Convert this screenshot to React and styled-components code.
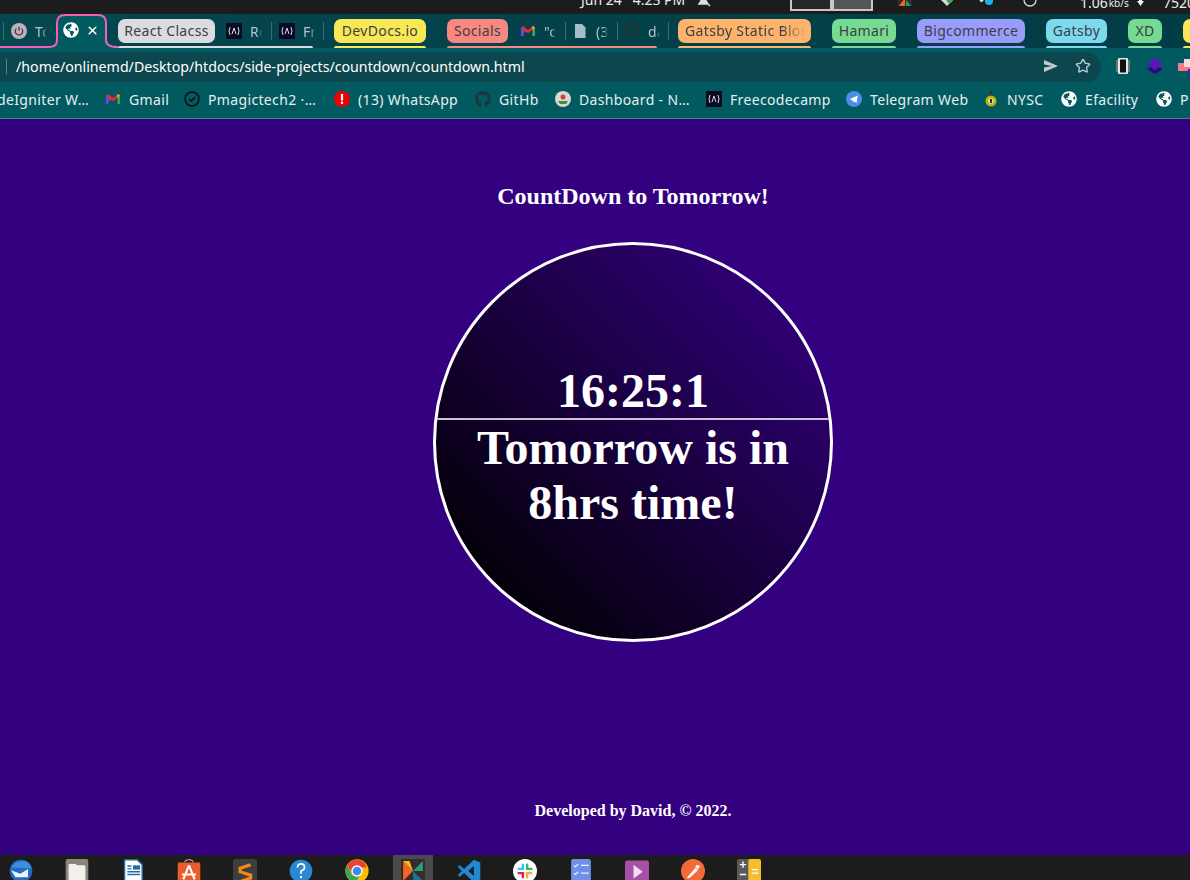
import styled, { createGlobalStyle } from "styled-components";
import { FaGithub, FaGlobeAmericas } from "react-icons/fa";
import { Star, X } from "lucide-react";

const Global = createGlobalStyle`
  html, body { margin: 0; padding: 0; background: #330080; }
  * { box-sizing: border-box; }
`;

const Screen = styled.div`
  width: 1190px;
  height: 880px;
  overflow: hidden;
  display: flex;
  flex-direction: column;
  font-family: "Noto Sans", "Open Sans", sans-serif;
  font-size: 14px;
  letter-spacing: 0.35px;
`;

/* top panel */
const Panel = styled.div`
  height: 14px;
  flex: none;
  background: #1c1c1c;
  display: flex;
  align-items: flex-end;
  overflow: hidden;
  color: #eee;
  letter-spacing: 0;
`;
const PanelItem = styled.div`
  flex: none;
  width: ${(p) => (p.$w ? `${p.$w}px` : "auto")};
  margin-left: ${(p) => p.$ml}px;
  margin-bottom: ${(p) => p.$mb ?? 6}px;
  display: flex;
  align-items: flex-end;
  line-height: 16px;
  white-space: nowrap;
`;
const NetUnit = styled.span`
  font-size: 10px;
  line-height: 10px;
  margin: 0 0 3px 1px;
`;
const WorkspaceBox = styled.div`
  width: ${(p) => p.$w}px;
  height: 16px;
  border: 2px solid #c8c8c8;
  background: ${(p) => (p.$on ? "#555" : "#262626")};
`;

/* tab strip */
const Strip = styled.div`
  height: 34px;
  flex: none;
  background: linear-gradient(90deg, #04474f, #023c44);
  display: flex;
  align-items: flex-start;
  padding: 5px 0 0 3px;
`;
const Sep = styled.div`
  width: 1px;
  height: 18px;
  margin-top: 3px;
  flex: none;
  background: #3d6d73;
`;
const TabItem = styled.div`
  flex: none;
  width: ${(p) => p.$w}px;
  height: 24px;
  padding-left: ${(p) => p.$pad}px;
  display: flex;
  align-items: center;
  gap: 8px;
  overflow: hidden;
`;
const TabTitle = styled.span`
  width: 12px;
  flex: none;
  overflow: hidden;
  white-space: nowrap;
  color: #b5c4c6;
  -webkit-mask-image: linear-gradient(90deg, #000 60%, transparent);
  mask-image: linear-gradient(90deg, #000 60%, transparent);
`;
const ActiveTab = styled.div`
  position: relative;
  flex: none;
  width: 51px;
  height: 34px;
  margin-top: -5px;
  padding: 0 0 2px 7px;
  display: flex;
  align-items: center;
  gap: 5px;
  color: #fff;
  svg { position: relative; flex: none; }
`;
const TabOutline = styled.svg`
  position: absolute !important;
  left: -56px;
  top: 0;
`;
const Group = styled.div`
  flex: none;
  margin-left: ${(p) => p.$ml}px;
  display: flex;
  flex-direction: column;
`;
const GroupRow = styled.div`
  display: flex;
  align-items: flex-start;
`;
const Chip = styled.div`
  flex: none;
  width: ${(p) => p.$w}px;
  height: 24px;
  border-radius: 7px;
  background: ${(p) => p.$bg};
  color: #3c4043;
  text-align: center;
  line-height: 23px;
  white-space: nowrap;
  overflow: hidden;
`;
const FadeLabel = styled.span`
  display: block;
  padding-left: 7px;
  text-align: left;
  -webkit-mask-image: linear-gradient(90deg, #000 78%, transparent 96%);
  mask-image: linear-gradient(90deg, #000 78%, transparent 96%);
`;
const Underline = styled.div`
  width: ${(p) => p.$w}px;
  height: 2px;
  margin-top: 3px;
  border-radius: 2px 2px 0 0;
  background: ${(p) => p.$bg};
`;

/* toolbar */
const Toolbar = styled.div`
  height: 34px;
  flex: none;
  background: #005a60;
  padding-top: 4px;
  display: flex;
  align-items: center;
`;
const Omnibox = styled.div`
  flex: none;
  width: 1101px;
  height: 30px;
  border-radius: 0 15px 15px 0;
  background: #0c474f;
  display: flex;
  align-items: center;
  padding: 0 2px 2px 6px;
  color: #fff;
`;
const OmniSep = styled.div`
  width: 1px;
  height: 15px;
  background: #5b8286;
  margin-right: 9px;
`;
const Url = styled.span`
  flex: 1;
  white-space: nowrap;
  letter-spacing: 0;
  font-size: 14.2px;
`;
const OmniIcon = styled.div`
  flex: none;
  width: 32px;
  display: flex;
  justify-content: center;
  color: #bfcccd;
`;
const ExtIcons = styled.div`
  flex: none;
  display: flex;
  margin-left: 6px;
  width: 83px;
  overflow: hidden;
`;
const ExtCell = styled.div`
  flex: none;
  width: 32px;
  display: flex;
  justify-content: center;
`;

/* bookmarks */
const Bookmarks = styled.div`
  height: 37px;
  flex: none;
  background: #005a60;
  border-bottom: 1px solid #3b8b8d;
  padding-bottom: 2px;
  display: flex;
  align-items: center;
  color: #e8eeee;
  overflow: hidden;
`;
const Bookmark = styled.div`
  flex: none;
  width: ${(p) => p.$w}px;
  margin-left: ${(p) => p.$ml ?? 0}px;
  display: flex;
  align-items: center;
  gap: 8px;
  white-space: nowrap;
  svg { flex: none; }
`;

/* page */
const Page = styled.main`
  flex: 1;
  background: #330080;
  color: #fff;
  font-family: "Liberation Serif", "Times New Roman", serif;
  font-weight: bold;
  letter-spacing: 0;
  display: flex;
  flex-direction: column;
  align-items: center;
  padding: 63px 0 0 76px;
`;
const Title = styled.h3`
  margin: 0;
  font-size: 24px;
  line-height: 28px;
`;
const Circle = styled.div`
  width: 400px;
  height: 400px;
  margin-top: 32px;
  border: 3px solid #fff;
  border-radius: 50%;
  background: linear-gradient(45deg, #000 8%, #330080 95%);
  padding-top: 118px;
  text-align: center;
  overflow: hidden;
`;
const Time = styled.div`
  font-size: 48px;
  line-height: 55px;
  border-bottom: 2px solid #c9c2d4;
`;
const Message = styled.div`
  font-size: 48px;
  line-height: 55px;
  padding: 0 30px;
`;
const Footer = styled.footer`
  margin-top: 160px;
  font-size: 16px;
  line-height: 18px;
`;

/* dock */
const Dock = styled.div`
  height: 25px;
  flex: none;
  background: #1c1c1c;
  display: flex;
  gap: 16px;
  padding-left: 1px;
  overflow: hidden;
`;
const DockCell = styled.div`
  flex: none;
  width: 40px;
  height: 25px;
  display: flex;
  justify-content: center;
  align-items: flex-start;
  padding-top: 4px;
  overflow: hidden;
  background: ${(p) => (p.$active ? "#4a4a4a" : "transparent")};
  svg { flex: none; width: 24px; height: 24px; }
`;

const Power = () => (
  <svg width="16" height="16" viewBox="0 0 16 16">
    <circle cx="8" cy="8" r="8" fill="#b9b4b8" />
    <path d="M5.4 5.6a3.7 3.7 0 1 0 5.2 0M8 3.8v4" stroke="#5b2a58" strokeWidth="1.3" fill="none" />
  </svg>
);
const Fcc = () => (
  <svg width="16" height="16" viewBox="0 0 16 16">
    <rect width="16" height="16" fill="#0a0a23" />
    <path d="M4 4Q2 8 4 12M12 4Q14 8 12 12M8 5L6 11M8 5L10 11" stroke="#d8d8e0" strokeWidth="1" fill="none" />
  </svg>
);
const GmailIcon = () => (
  <svg width="16" height="16" viewBox="0 0 16 16">
    <path d="M1 13V4.5l2.6 1V13z" fill="#7b3fe0" />
    <path d="M12.4 13V5.500l2.600-1V13z" fill="#34a853" />
    <path d="M1 4.500L3 3l5 4 5-4 2 1.500-2.600 2.400L8 10.300 3.600 6.900z" fill="#ea2b2b" />
    <path d="M12.400 6.900L15 4.500 13 3l-.6.500z" fill="#fbbc04" />
    <path d="M3.600 6.900v3L6 8.500z" fill="#2f6fe8" />
  </svg>
);
const DocIcon = () => (
  <svg width="16" height="16" viewBox="0 0 16 16">
    <path d="M3 1h7l3.500 3.500V15H3z" fill="#a6bcc8" />
  </svg>
);
const Globe = () => <FaGlobeAmericas size={16} color="#fff" />;
const Github = ({ color = "#22343a" }) => <FaGithub size={16} color={color} />;

const CheckCircle = () => (
  <svg width="16" height="16" viewBox="0 0 16 16">
    <circle cx="8" cy="8" r="7" stroke="#0b0b0b" strokeWidth="1.500" fill="none" />
    <path d="M5 8l2.200 2L11 6.200" stroke="#0b0b0b" strokeWidth="1.500" fill="none" />
  </svg>
);
const AlertIcon = () => (
  <svg width="16" height="16" viewBox="0 0 16 16">
    <circle cx="8" cy="8" r="8" fill="#f00000" />
    <rect x="6.900" y="3" width="2.200" height="6.500" fill="#fff" />
    <rect x="6.900" y="10.700" width="2.200" height="2.200" fill="#fff" />
  </svg>
);
const DashIcon = () => (
  <svg width="16" height="16" viewBox="0 0 16 16">
    <circle cx="8" cy="8" r="8" fill="#d8d8d0" />
    <path d="M3 10h10l-2 3H5z" fill="#3f8f3f" />
    <circle cx="8" cy="6" r="2.500" fill="#c8443c" />
  </svg>
);
const TelegramIcon = () => (
  <svg width="16" height="16" viewBox="0 0 16 16">
    <circle cx="8" cy="8" r="8" fill="#4a90e2" />
    <path d="M3.500 8.200L11.800 4.500 10.500 12 8 10.300 6.900 11.500 6.500 9.200z" fill="#fff" />
  </svg>
);
const NyscIcon = () => (
  <svg width="16" height="16" viewBox="0 0 16 16">
    <rect x="7.200" y="0" width="1.600" height="5" fill="#5b2020" />
    <circle cx="8" cy="10" r="5.500" fill="#b9b400" />
    <circle cx="8" cy="10" r="3" fill="#d6d6b0" />
    <rect x="7" y="8" width="2" height="4" fill="#333" />
  </svg>
);
const SendIcon = () => (
  <svg width="16" height="14" viewBox="0 0 16 14">
    <path d="M1 1l14 6-14 6V8.500L9 7 1 5.500z" fill="#bfcccd" />
  </svg>
);
const PhoneExt = () => (
  <svg width="16" height="18" viewBox="0 0 16 18">
    <rect x="1" y="3" width="14" height="12" fill="#5e7d80" />
    <rect x="3" y="1" width="10" height="16" rx="1" fill="#e6e6e6" />
    <rect x="5" y="2.500" width="6" height="13" fill="#111" />
  </svg>
);
const LayersExt = () => (
  <svg width="18" height="18" viewBox="0 0 18 18">
    <path d="M9 8l8 4-8 5-8-5z" fill="#2d0a7a" />
    <path d="M9 1l8 6-8 6-8-6z" fill="#5a14b8" />
  </svg>
);
const PinkExt = () => (
  <svg width="18" height="20" viewBox="0 0 18 20">
    <rect x="0" y="6" width="12" height="8" fill="#f47a86" />
    <rect x="6" y="2" width="8" height="8" fill="#ffd8dc" />
    <rect x="10" y="12" width="6" height="8" fill="#4a14c8" />
  </svg>
);

const Thunderbird = () => (
  <svg viewBox="0 0 34 34">
    <circle cx="17" cy="17" r="16" fill="#1f6cc0" />
    <path d="M3 12Q10 2 22 3q8 2 10 10z" fill="#3d8ee0" />
    <path d="M3 16l13 5 11-7v12H9z" fill="#eef2f6" />
  </svg>
);
const Files = () => (
  <svg viewBox="0 0 34 34">
    <rect x="1" y="0" width="32" height="34" rx="3" fill="#8c8678" />
    <path d="M5 9q0-2 2-2h8l2 2h10q2 0 2 2v17q0 2-2 2H7q-2 0-2-2z" fill="#f2f0ec" />
  </svg>
);
const Writer = () => (
  <svg viewBox="0 0 34 34">
    <path d="M5 1h18l7 7v25H5z" fill="#fff" stroke="#1f6ca8" strokeWidth="2" />
    <rect x="17" y="9" width="10" height="6" fill="#1f6ca8" />
    <path d="M9 10h6M9 14h6M9 18h18M9 22h18" stroke="#1f6ca8" strokeWidth="2" />
  </svg>
);
const AppCenter = () => (
  <svg viewBox="0 0 34 34">
    <path d="M11 5q0-4 6-4t6 4" stroke="#c9b9a8" strokeWidth="1.500" fill="none" />
    <rect x="1" y="5" width="32" height="29" rx="2" fill="#e95d2a" />
    <path d="M17 9L9 29M17 9l8 20M7 22h20" stroke="#fff" strokeWidth="3" fill="none" />
  </svg>
);
const Sublime = () => (
  <svg viewBox="0 0 34 34">
    <rect x="0" y="0" width="34" height="34" rx="3" fill="#3d3d3d" />
    <path d="M25 8L10 13v5l15 5v4L10 32" stroke="#f28a1a" strokeWidth="4.500" fill="none" />
  </svg>
);
const Help = () => (
  <svg viewBox="0 0 34 34">
    <circle cx="17" cy="17" r="16" fill="#2b87d3" />
    <path d="M12 12q0-5 5-5t5 5q0 3-5 5v4" stroke="#fff" strokeWidth="2.400" fill="none" />
    <rect x="15.500" y="24" width="3" height="3" fill="#fff" />
  </svg>
);
const Chrome = () => (
  <svg viewBox="0 0 34 34">
    <circle cx="17" cy="17" r="16.500" fill="#fbbc04" />
    <path d="M17 .5A16.500 16.500 0 0 0 3 9l7 12 7-9h14A16.500 16.500 0 0 0 17 .5z" fill="#ea4335" />
    <path d="M3 9a16.500 16.500 0 0 0 12 24.500l6-10.500H10z" fill="#34a853" />
    <circle cx="17" cy="17" r="8" fill="#fff" />
    <circle cx="17" cy="17" r="6" fill="#4285f4" />
  </svg>
);
const Jetbrains = () => (
  <svg viewBox="0 0 34 34">
    <rect x="0" y="0" width="34" height="34" fill="#3a2a2a" />
    <path d="M3 3l14 14L3 31z" fill="#f26522" />
    <path d="M17 17L31 3v14z" fill="#1fa37c" />
    <path d="M17 17l14 14H17z" fill="#107a8c" />
    <path d="M3 3h9l5 14z" fill="#e8c020" />
  </svg>
);
const VsCode = () => (
  <svg viewBox="0 0 34 34">
    <path d="M24 1l9 4v24l-9 4-14-13-6 5-3-2 6-6-6-6 3-2 6 5zm0 9l-8 7 8 7z" fill="#1f8ad2" />
  </svg>
);
const Slack = () => (
  <svg viewBox="0 0 34 34">
    <circle cx="17" cy="17" r="17" fill="#fff" />
    <path d="M14 8v6H8" stroke="#36c5f0" strokeWidth="3.500" fill="none" strokeLinecap="round" />
    <path d="M20 8v6h6" stroke="#2eb67d" strokeWidth="3.500" fill="none" strokeLinecap="round" />
    <path d="M8 20h6v6" stroke="#e01e5a" strokeWidth="3.500" fill="none" strokeLinecap="round" />
    <path d="M20 26v-6h6" stroke="#ecb22e" strokeWidth="3.500" fill="none" strokeLinecap="round" />
  </svg>
);
const Tasks = () => (
  <svg viewBox="0 0 34 34">
    <rect x="3" y="0" width="28" height="34" rx="3" fill="#6f8fe8" />
    <path d="M7 9l2 2 4-4M7 20l2 2 4-4" stroke="#dfe7ff" strokeWidth="1.800" fill="none" />
    <path d="M17 9h11M17 20h11" stroke="#eef2ff" strokeWidth="2" />
  </svg>
);
const Video = () => (
  <svg viewBox="0 0 34 34">
    <rect x="0" y="2" width="34" height="30" rx="3" fill="#a850a8" />
    <path d="M12 8l13 10-13 10z" fill="#f0dff0" />
  </svg>
);
const Postman = () => (
  <svg viewBox="0 0 34 34">
    <circle cx="17" cy="17" r="17" fill="#f26a3a" />
    <path d="M8 27l12-14 4 3-12 11zM22 8l5 2-3 5-4-3z" fill="#fff" />
  </svg>
);
const Calc = () => (
  <svg viewBox="0 0 34 34">
    <rect x="0" y="0" width="20" height="34" rx="3" fill="#5a5a5a" />
    <rect x="16" y="0" width="18" height="34" rx="3" fill="#f6be2c" />
    <path d="M4 8h9M8.500 3.500v9M4 22h9M21 15h9M21 20h9" stroke="#fff" strokeWidth="2" />
  </svg>
);

const dockApps = [Thunderbird, Files, Writer, AppCenter, Sublime, Help, Chrome, Jetbrains, VsCode, Slack, Tasks, Video, Postman, Calc];

const bookmarks = [
  { w: 108, ml: -3, label: "deIgniter W…" },
  { w: 79, icon: <GmailIcon />, label: "Gmail" },
  { w: 150, icon: <CheckCircle />, label: "Pmagictech2 ·…" },
  { w: 141, icon: <AlertIcon />, label: "(13) WhatsApp" },
  { w: 80, icon: <Github />, label: "GitHb" },
  { w: 151, icon: <DashIcon />, label: "Dashboard - N…" },
  { w: 140, icon: <Fcc />, label: "Freecodecamp" },
  { w: 137, icon: <TelegramIcon />, label: "Telegram Web" },
  { w: 78, icon: <NyscIcon />, label: "NYSC" },
  { w: 95, icon: <Globe />, label: "Efacility" },
  { w: 40, icon: <Globe />, label: "P" },
];

function App() {
  return (
    <Screen>
      <Global />
      <Panel>
        <PanelItem $ml={581} $w={105}>Jun 24&nbsp;&nbsp;&nbsp;4:23 PM</PanelItem>
        <PanelItem $ml={11} $mb={7}>
          <svg width="14" height="14" viewBox="0 0 14 14">
            <path d="M2 11h9L9 8V5a3 3 0 0 0-5 0v3zM1 1l12 12" stroke="#ddd" strokeWidth="1.500" fill="#ddd" />
          </svg>
        </PanelItem>
        <PanelItem $ml={79} $mb={3}>
          <WorkspaceBox $w={42} />
          <WorkspaceBox $w={41} $on />
        </PanelItem>
        <PanelItem $ml={25} $mb={8}>
          <svg width="14" height="14" viewBox="0 0 14 14">
            <rect width="14" height="14" fill="#3a2a2a" />
            <path d="M1 14l6-8v8z" fill="#f26522" />
            <path d="M8 8l5 6H8z" fill="#1fa37c" />
          </svg>
        </PanelItem>
        <PanelItem $ml={28} $mb={8}>
          <svg width="14" height="14" viewBox="0 0 14 14">
            <path d="M1 0h12v8l-6 6-6-6z" fill="#d8d8d8" />
            <circle cx="9.500" cy="8" r="3" fill="#3aa655" />
          </svg>
        </PanelItem>
        <PanelItem $ml={25} $mb={9}>
          <svg width="14" height="12" viewBox="0 0 14 12">
            <circle cx="2.500" cy="7" r="2" fill="#e8e8e8" />
            <circle cx="10" cy="8" r="4" fill="#19b5e8" />
          </svg>
        </PanelItem>
        <PanelItem $ml={30} $mb={7}>
          <svg width="14" height="14" viewBox="0 0 14 14">
            <circle cx="7" cy="7" r="6" stroke="#ddd" strokeWidth="1.300" fill="none" />
          </svg>
        </PanelItem>
        <PanelItem $ml={43} $mb={3} $w={57}>1.06<NetUnit>kb/s</NetUnit></PanelItem>
        <PanelItem $ml={0} $mb={8}>
          <svg width="7" height="12" viewBox="0 0 7 12">
            <path d="M2 0h3v7h2l-3.500 5L0 7h2z" fill="#eee" />
          </svg>
        </PanelItem>
        <PanelItem $ml={19} $mb={3}>7520</PanelItem>
      </Panel>

      <Strip>
        <Sep />
        <TabItem $w={52} $pad={7}>
          <Power />
          <TabTitle>To</TabTitle>
        </TabItem>
        <ActiveTab>
          <TabOutline width="120" height="34" viewBox="0 0 120 34">
            <path d="M0 33H49Q57 33 57 26V9Q57 1 65 1H98Q106 1 106 9V26Q106 33 118 33V34H0z" fill="#005a60" />
            <path d="M0 33H49Q57 33 57 26V9Q57 1 65 1H98Q106 1 106 9V26Q106 33 118 33" fill="none" stroke="#f25fb8" strokeWidth="2" />
          </TabOutline>
          <Globe />
          <X size={13} strokeWidth={3} style={{ marginLeft: 2 }} />
        </ActiveTab>

        <Group $ml={11}>
          <GroupRow>
            <Chip $w={97} $bg="#dadce0">React Clacss</Chip>
            <TabItem $w={56} $pad={11}><Fcc /><TabTitle>Re</TabTitle></TabItem>
            <Sep />
            <TabItem $w={51} $pad={7}><Fcc /><TabTitle>Fr</TabTitle></TabItem>
            <Sep />
          </GroupRow>
          <Underline $w={195} $bg="#dadce0" />
        </Group>

        <Group $ml={10}>
          <Chip $w={92} $bg="#f8e855">DevDocs.io</Chip>
          <Underline $w={92} $bg="#f8e855" />
        </Group>

        <Group $ml={21}>
          <GroupRow>
            <Chip $w={61} $bg="#f98782">Socials</Chip>
            <TabItem $w={57} $pad={12}><GmailIcon /><TabTitle>"c</TabTitle></TabItem>
            <Sep />
            <TabItem $w={51} $pad={6}><DocIcon /><TabTitle>(3</TabTitle></TabItem>
            <Sep />
            <TabItem $w={50} $pad={6}><Github /><TabTitle>da</TabTitle></TabItem>
            <Sep />
          </GroupRow>
          <Underline $w={210} $bg="#f98782" />
        </Group>

        <Group $ml={9}>
          <Chip $w={133} $bg="#fdb36b"><FadeLabel>Gatsby Static Blog</FadeLabel></Chip>
          <Underline $w={133} $bg="#fdb36b" />
        </Group>
        <Group $ml={21}>
          <Chip $w={64} $bg="#76da92">Hamari</Chip>
          <Underline $w={64} $bg="#76da92" />
        </Group>
        <Group $ml={21}>
          <Chip $w={108} $bg="#9a9cfb">Bigcommerce</Chip>
          <Underline $w={108} $bg="#9a9cfb" />
        </Group>
        <Group $ml={21}>
          <Chip $w={61} $bg="#7dd9ee">Gatsby</Chip>
          <Underline $w={61} $bg="#7dd9ee" />
        </Group>
        <Group $ml={21}>
          <Chip $w={34} $bg="#76da92">XD</Chip>
          <Underline $w={34} $bg="#76da92" />
        </Group>
        <Group $ml={21}>
          <Chip $w={30} $bg="#f8e855" />
          <Underline $w={30} $bg="#f8e855" />
        </Group>
      </Strip>

      <Toolbar>
        <Omnibox>
          <OmniSep />
          <Url>/home/onlinemd/Desktop/htdocs/side-projects/countdown/countdown.html</Url>
          <OmniIcon><SendIcon /></OmniIcon>
          <OmniIcon><Star size={16} /></OmniIcon>
        </Omnibox>
        <ExtIcons>
          <ExtCell><PhoneExt /></ExtCell>
          <ExtCell><LayersExt /></ExtCell>
          <ExtCell><PinkExt /></ExtCell>
        </ExtIcons>
      </Toolbar>

      <Bookmarks>
        {bookmarks.map((b) => (
          <Bookmark key={b.label} $w={b.w} $ml={b.ml}>
            {b.icon}
            <span>{b.label}</span>
          </Bookmark>
        ))}
      </Bookmarks>

      <Page>
        <Title>CountDown to Tomorrow!</Title>
        <Circle>
          <Time>16:25:1</Time>
          <Message>Tomorrow is in 8hrs time!</Message>
        </Circle>
        <Footer>Developed by David, © 2022.</Footer>
      </Page>

      <Dock>
        {dockApps.map((Icon, i) => (
          <DockCell key={i} $active={i === 7}><Icon /></DockCell>
        ))}
      </Dock>
    </Screen>
  );
}

export default App;
